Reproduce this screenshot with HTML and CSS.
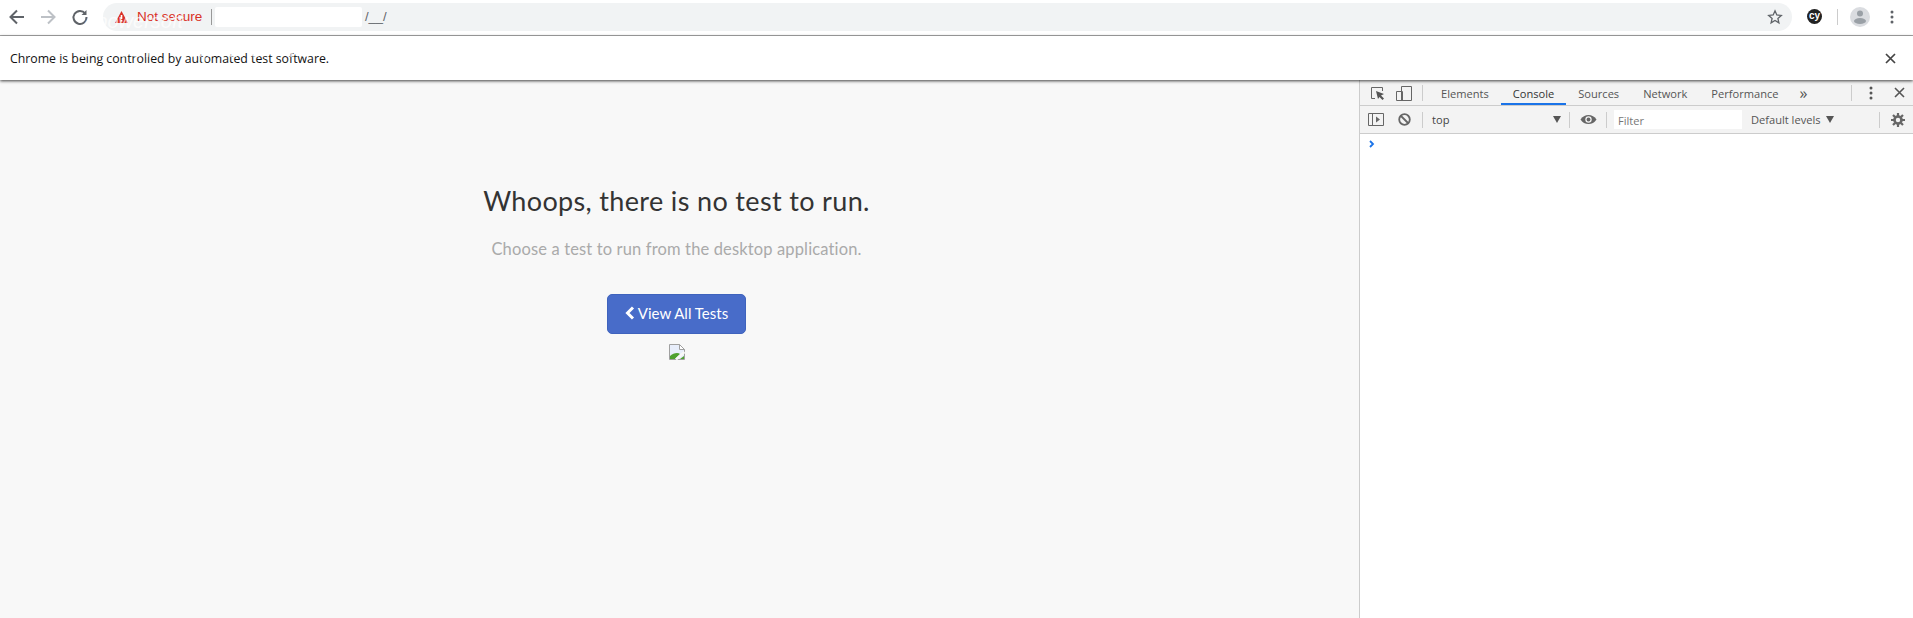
FILE: index.html
```html
<!DOCTYPE html>
<html lang="en">
<head>
<meta charset="utf-8">
<title>Whoops, there is no test to run.</title>
<link rel="stylesheet" href="styles.css">
</head>
<body>
<header class="toolbar">
  <svg class="nav nav-back" width="18" height="18" viewBox="0 0 18 18"><path d="M16 9H3M9 2.500L2.500 9 9 15.500" fill="none" stroke="#5f6368" stroke-width="2"/></svg>
  <svg class="nav nav-fwd" width="18" height="18" viewBox="0 0 18 18"><path d="M2 9h13M9 2.500 15.500 9 9 15.500" fill="none" stroke="#bdc1c6" stroke-width="2"/></svg>
  <svg class="nav nav-reload" width="18" height="18" viewBox="0 0 18 18"><path d="M14.200 5.500A6.500 6.500 0 1 0 15.500 9" fill="none" stroke="#5f6368" stroke-width="2"/><path d="M15.500 2v5h-5z" fill="#5f6368"/></svg>
  <div class="omnibox">
    <svg class="warn" width="15" height="14" viewBox="0 0 15 14"><path d="M7.500 1 14 13H1z" fill="#d93025"/><rect x="6.700" y="5" width="1.600" height="4" fill="#fff"/><rect x="6.700" y="10" width="1.600" height="1.600" fill="#fff"/></svg>
    <span class="not-secure">Not secure</span>
    <span class="omni-sep"></span>
    <span class="redacted"></span>
    <span class="url">/__/</span>
    <svg class="star" width="16" height="16" viewBox="0 0 16 16"><path d="M8 1.800l1.800 4.200 4.500.4-3.400 3 1 4.400L8 11.500l-3.900 2.300 1-4.400-3.400-3 4.500-.4z" fill="none" stroke="#5f6368" stroke-width="1.300"/></svg>
  </div>
  <div class="cy-badge">cy</div>
  <span class="tool-sep"></span>
  <svg class="avatar" width="20" height="20" viewBox="0 0 20 20"><circle cx="10" cy="10" r="10" fill="#dadce0"/><circle cx="10" cy="6.500" r="3" fill="#9aa0a6"/><ellipse cx="10" cy="14" rx="6" ry="3" fill="#9aa0a6"/></svg>
  <svg class="kebab" width="4" height="14" viewBox="0 0 4 14"><circle cx="2" cy="2" r="1.500" fill="#5f6368"/><circle cx="2" cy="7" r="1.500" fill="#5f6368"/><circle cx="2" cy="12" r="1.500" fill="#5f6368"/></svg>
</header>

<div class="infobar">
  <span class="info-text">Chrome is being controlled by automated test software.</span>
  <svg class="info-close" width="11" height="11" viewBox="0 0 11 11"><path d="M1 1l9 9M10 1l-9 9" stroke="#444" stroke-width="1.700"/></svg>
</div>

<div class="watermark">
  <span class="wm-small">Apowersoft</span>
  <span class="wm-big">Screen Capture Pro</span>
</div>

<main class="workspace">
  <section class="page">
    <h1 class="title">Whoops, there is no test to run.</h1>
    <p class="subtitle">Choose a test to run from the desktop application.</p>
    <button class="view-all">
      <svg width="10" height="14" viewBox="0 0 10 14"><path d="M8 1.500 2.500 7 8 12.500" fill="none" stroke="#fff" stroke-width="3"/></svg>
      <span>View All Tests</span>
    </button>
    <svg class="broken" width="16" height="16" viewBox="0 0 16 16">
      <path d="M.5.500h10l5 5v10H.5z" fill="#e8eefb" stroke="#a0a0a0"/>
      <path d="M10.500.500v5h5z" fill="#fff" stroke="#a0a0a0"/>
      <path d="M1 15v-3c3-3 8-4 10-2l-5 5z" fill="#4ea130"/>
      <path d="M7 15.500 15.500 8" stroke="#f8f8f8" stroke-width="2.500"/>
      <path d="M11 15l4-3v3z" fill="#4ea130"/>
    </svg>
  </section>

  <aside class="devtools">
    <div class="dt-tabs">
      <svg class="dt-inspect" width="15" height="14" viewBox="0 0 15 14"><path d="M5 12.500H1.500v-11h11V5" fill="none" stroke="#666" stroke-width="1"/><path d="M6 5l8 3-3 1.500 3 3-1.500 1.500-3-3L8 13z" fill="#555"/></svg>
      <svg class="dt-device" width="16" height="16" viewBox="0 0 16 16"><path d="M5.500 1.500h10v14h-10zM.5 6.500h6v9h-6z" fill="#f3f3f3" stroke="#666"/></svg>
      <span class="dt-sep sep-a"></span>
      <span class="tab tab-elements">Elements</span>
      <span class="tab tab-console">Console</span>
      <span class="tab">Sources</span>
      <span class="tab">Network</span>
      <span class="tab">Performance</span>
      <span class="tab-more">»</span>
      <span class="dt-sep sep-b"></span>
      <svg class="dt-kebab" width="4" height="14" viewBox="0 0 4 14"><circle cx="2" cy="2" r="1.500" fill="#555"/><circle cx="2" cy="7" r="1.500" fill="#555"/><circle cx="2" cy="12" r="1.500" fill="#555"/></svg>
      <svg class="dt-close" width="11" height="11" viewBox="0 0 11 11"><path d="M1 1l9 9M10 1l-9 9" stroke="#555" stroke-width="1.600"/></svg>
    </div>
    <div class="dt-console-bar">
      <svg class="bar-sidebar" width="16" height="13" viewBox="0 0 16 13"><path d="M.5.500h15v12H.5zM4.500.500v12" fill="none" stroke="#666"/><path d="M8 3.500l4 3-4 3z" fill="#666"/></svg>
      <svg class="bar-block" width="13" height="13" viewBox="0 0 13 13"><circle cx="6.500" cy="6.500" r="5.300" fill="none" stroke="#666" stroke-width="1.800"/><path d="M3 3l7 7" stroke="#666" stroke-width="1.800"/></svg>
      <span class="dt-sep sep-c"></span>
      <span class="ctx">top</span>
      <span class="tri tri-ctx"></span>
      <span class="dt-sep sep-d"></span>
      <svg class="bar-eye" width="17" height="11" viewBox="0 0 17 11"><path d="M.5 5.500C4 -.5 13 -.5 16.500 5.500 13 11.500 4 11.500.5 5.500z" fill="#666"/><circle cx="8.500" cy="5.500" r="3.200" fill="#f3f3f3"/><circle cx="8.500" cy="5.500" r="1.900" fill="#666"/></svg>
      <span class="dt-sep sep-e"></span>
      <span class="filter">Filter</span>
      <span class="levels">Default levels</span>
      <span class="tri tri-levels"></span>
      <span class="dt-sep sep-f"></span>
      <svg class="bar-gear" width="14" height="14" viewBox="0 0 14 14"><circle cx="7" cy="7" r="3.500" fill="none" stroke="#666" stroke-width="2.600"/><path d="M7 0v3M7 11v3M0 7h3M11 7h3M2 2l2 2M10 10l2 2M12 2l-2 2M4 10l-2 2" stroke="#666" stroke-width="2.200"/></svg>
    </div>
    <div class="dt-output">
      <svg width="6" height="8" viewBox="0 0 6 8"><path d="M1 1l3 3-3 3" fill="none" stroke="#1a73e8" stroke-width="1.800"/></svg>
    </div>
  </aside>
</main>
</body>
</html>
```

FILE: styles.css
```css
* { box-sizing: border-box; }
html, body { margin: 0; height: 100%; }
body {
  width: 1913px;
  height: 618px;
  overflow: hidden;
  display: flex;
  flex-direction: column;
  position: relative;
  background: #fff;
  font-family: "Open Sans", sans-serif;
}

/* Browser toolbar */
.toolbar {
  height: 36px;
  flex: none;
  display: flex;
  align-items: center;
  padding: 0 0 2px 8px;
  background: #fff;
  border-bottom: 1px solid #aaa;
}
.nav { flex: none; }
.nav-fwd { margin-left: 13px; }
.nav-reload { margin-left: 14px; }
.omnibox {
  width: 1689px;
  height: 28px;
  margin-left: 14px;
  padding: 0 9px 0 11px;
  display: flex;
  align-items: center;
  border-radius: 14px;
  background: #f1f3f4;
  flex: none;
}
.warn { flex: none; }
.not-secure {
  width: 66px;
  margin-left: 8px;
  font: 13.500px "Liberation Sans", sans-serif;
  color: #d93025;
  white-space: nowrap;
}
.omni-sep { width: 1px; height: 16px; margin-left: 8px; background: #999; }
.redacted { width: 147px; height: 20px; margin-left: 3px; background: #fff; border-radius: 2px; }
.url { margin-left: 3px; font: 13px "Liberation Sans", sans-serif; color: #5f6368; }
.star { margin-left: auto; }
.cy-badge {
  width: 15px;
  height: 15px;
  margin-left: 15px;
  border-radius: 50%;
  background: #222;
  color: #fff;
  font: bold 10px/14px "Liberation Sans", sans-serif;
  text-align: center;
  flex: none;
}
.tool-sep { width: 1px; height: 16px; margin-left: 15px; background: #ccc; flex: none; }
.avatar { margin-left: 12px; flex: none; }
.kebab { margin-left: 20px; flex: none; }

/* Infobar */
.infobar {
  height: 44px;
  flex: none;
  display: flex;
  align-items: center;
  justify-content: space-between;
  padding: 1px 17px 0 10px;
  background: #fff;
  box-shadow: 0 1px 3px rgba(0,0,0,.75);
  position: relative;
  z-index: 2;
}
.info-text { font: 12.300px "Open Sans", sans-serif; color: #111; }

/* Screen recorder watermark */
.watermark {
  position: absolute;
  left: 75px;
  top: 10px;
  z-index: 3;
  display: flex;
  flex-direction: column;
  color: rgba(255,255,255,.72);
  font-family: "Liberation Sans", sans-serif;
  font-style: italic;
  pointer-events: none;
}
.wm-small { font-size: 20px; line-height: 22px; margin-left: 8px; }
.wm-big { font-size: 27px; line-height: 32px; }

/* Page */
.workspace { flex: 1; display: flex; min-height: 0; }
.page {
  width: 1359px;
  flex: none;
  display: flex;
  flex-direction: column;
  align-items: center;
  padding-right: 6px;
  background: #f8f8f8;
  font-family: Lato, sans-serif;
}
.title {
  margin: 105px 0 0;
  font-size: 27px;
  line-height: 32px;
  font-weight: 400;
  letter-spacing: .35px;
  color: #333;
}
.subtitle {
  margin: 21px 0 0;
  font-size: 16.500px;
  line-height: 22px;
  letter-spacing: .14px;
  color: #aaa;
}
.view-all {
  width: 139px;
  height: 40px;
  margin-top: 34px;
  display: flex;
  align-items: center;
  justify-content: center;
  gap: 3px;
  padding: 0 0 2px;
  border: 1px solid #3f63bd;
  border-radius: 5px;
  background: #486cc9;
  color: #fff;
  font: 15px Lato, sans-serif;
}
.broken { margin-top: 10px; }

/* DevTools */
.devtools {
  flex: 1;
  min-width: 0;
  display: flex;
  flex-direction: column;
  border-left: 1px solid #ccc;
  background: #fff;
  font: 11.100px "Open Sans", sans-serif;
  color: #555;
}
.dt-tabs {
  height: 26px;
  flex: none;
  display: flex;
  align-items: center;
  background: #f3f3f3;
  border-bottom: 1px solid #ccc;
}
.dt-inspect { margin-left: 10px; flex: none; }
.dt-device { margin-left: 11px; flex: none; }
.dt-sep { width: 1px; height: 16px; background: #ccc; flex: none; }
.sep-a { margin-left: 10px; }
.tab { height: 25px; padding: 0 12px; line-height: 27px; flex: none; }
.tab-elements { margin-left: 6px; }
.tab-console { color: #333; box-shadow: inset 0 -2px 0 #1a73e8; }
.tab-more { margin-left: 9px; font-size: 16px; line-height: 20px; color: #555; flex: none; }
.sep-b { margin-left: 44px; }
.dt-kebab { margin-left: 17px; flex: none; }
.dt-close { margin-left: 21px; flex: none; }
.dt-console-bar {
  height: 28px;
  flex: none;
  display: flex;
  align-items: center;
  background: #f3f3f3;
  border-bottom: 1px solid #ccc;
}
.bar-sidebar { margin-left: 8px; flex: none; }
.bar-block { margin-left: 14px; flex: none; }
.sep-c { margin-left: 11px; }
.ctx { margin-left: 9px; width: 121px; line-height: 31px; color: #444; flex: none; }
.tri { width: 0; height: 0; border-left: 4px solid transparent; border-right: 4px solid transparent; border-top: 7px solid #555; flex: none; }
.sep-d { margin-left: 8px; }
.bar-eye { margin-left: 10px; flex: none; }
.sep-e { margin-left: 9px; }
.filter {
  width: 128px;
  height: 19px;
  margin-left: 7px;
  padding-left: 4px;
  line-height: 21px;
  background: #fff;
  color: #777;
  flex: none;
}
.levels { width: 75px; margin-left: 9px; line-height: 31px; white-space: nowrap; flex: none; }
.sep-f { margin-left: 45px; }
.bar-gear { margin-left: 11px; flex: none; }
.dt-output { flex: 1; padding: 6px 0 0 9px; line-height: 0; }
```
